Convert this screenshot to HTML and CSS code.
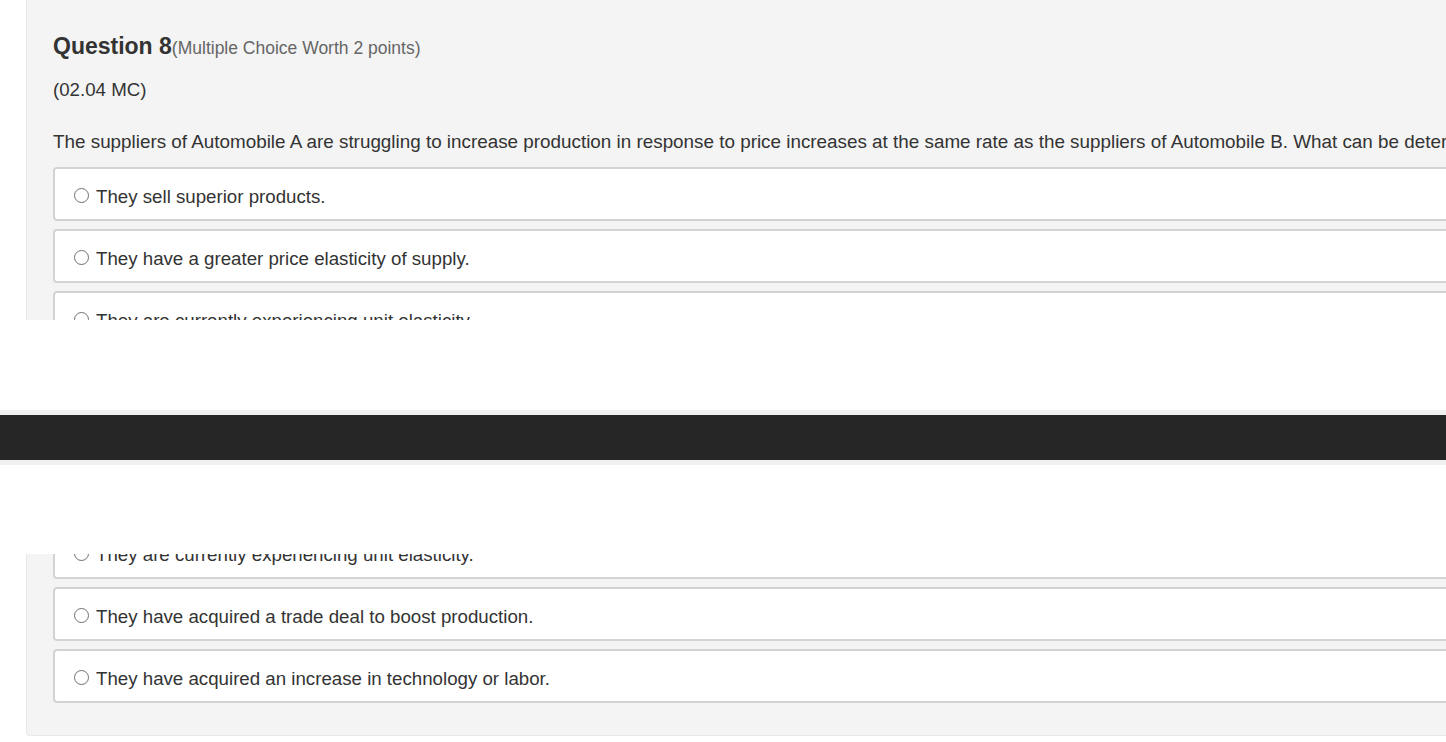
FILE: index.html
```html
<!DOCTYPE html>
<html lang="en">
<head>
<meta charset="utf-8">
<title>Question 8</title>
<link rel="stylesheet" href="styles.css">
</head>
<body>
<div class="screen">
  <section class="pane pane-top">
    <div class="card card-open-top">
      <h2 class="q-title">Question 8<span class="q-meta">(Multiple Choice Worth 2 points)</span></h2>
      <p class="q-code">(02.04 MC)</p>
      <p class="q-text">The suppliers of Automobile A are struggling to increase production in response to price increases at the same rate as the suppliers of Automobile B. What can be determined about the suppliers of Automobile A?</p>
      <ul class="options">
        <li class="option"><span class="radio"></span><span class="label">They sell superior products.</span></li>
        <li class="option"><span class="radio"></span><span class="label">They have a greater price elasticity of supply.</span></li>
        <li class="option"><span class="radio"></span><span class="label">They are currently experiencing unit elasticity.</span></li>
      </ul>
    </div>
  </section>

  <div class="gap-top"></div>
  <div class="dark-bar"></div>
  <div class="gap-bottom"></div>

  <section class="pane pane-bottom">
    <div class="card card-open-bottom">
      <ul class="options">
        <li class="option"><span class="radio"></span><span class="label">They are currently experiencing unit elasticity.</span></li>
        <li class="option"><span class="radio"></span><span class="label">They have acquired a trade deal to boost production.</span></li>
        <li class="option"><span class="radio"></span><span class="label">They have acquired an increase in technology or labor.</span></li>
      </ul>
    </div>
  </section>
</div>
</body>
</html>
```

FILE: styles.css
```css
html, body {
  margin: 0;
  padding: 0;
  background: #ffffff;
}

body {
  width: 1446px;
  height: 742px;
  overflow: hidden;
  font-family: "Liberation Sans", Arial, Helvetica, sans-serif;
  color: #333333;
}

.screen {
  display: flex;
  flex-direction: column;
  width: 1446px;
  height: 742px;
}

.pane {
  overflow: hidden;
  display: flex;
  flex-direction: column;
  flex: none;
}

.pane-top {
  height: 320px;
  justify-content: flex-start;
}

.pane-bottom {
  height: 188px;
  justify-content: flex-end;
  padding-bottom: 6px;
  box-sizing: border-box;
}

.gap-top {
  height: 90px;
  flex: none;
}

.dark-bar {
  height: 45px;
  flex: none;
  background: #262626;
  border-top: 5px solid #f0f0f0;
  border-bottom: 5px solid #f0f0f0;
}

.gap-bottom {
  height: 89px;
  flex: none;
}

.card {
  flex: none;
  margin-left: 26px;
  width: 1700px;
  background: #f4f4f4;
  border: 1px solid #e9e9e9;
  border-radius: 4px;
  padding: 0 26px;
  box-sizing: border-box;
}

.card-open-top {
  border-top: none;
  border-top-left-radius: 0;
  border-top-right-radius: 0;
  padding-top: 33px;
}

.card-open-bottom {
  border-top: none;
  border-top-left-radius: 0;
  border-top-right-radius: 0;
  padding-bottom: 32px;
}

.q-title {
  margin: 0;
  font-size: 23px;
  line-height: 27px;
  font-weight: bold;
  color: #333333;
  white-space: nowrap;
}

.q-meta {
  font-size: 17.5px;
  font-weight: normal;
  color: #666666;
}

.q-code {
  margin: 17px 0 0;
  font-size: 18.7px;
  line-height: 21px;
}

.q-text {
  margin: 31px 0 0;
  font-size: 18.85px;
  line-height: 21px;
  white-space: nowrap;
}

.options {
  list-style: none;
  margin: 15px 0 0;
  padding: 0;
  display: flex;
  flex-direction: column;
  gap: 8px;
}

.card-open-bottom .options {
  margin-top: 0;
}

.option {
  display: flex;
  align-items: flex-start;
  gap: 7px;
  height: 54px;
  box-sizing: border-box;
  padding: 17px 19px 12px;
  background: #ffffff;
  border: 2px solid #d3d3d3;
  border-radius: 4px;
  font-size: 18.7px;
  line-height: 21px;
  color: #333333;
  white-space: nowrap;
}

.radio {
  flex: none;
  width: 15px;
  height: 15px;
  margin-top: 2px;
  box-sizing: border-box;
  border: 1px solid #707070;
  border-radius: 50%;
  background: #ffffff;
}
```
